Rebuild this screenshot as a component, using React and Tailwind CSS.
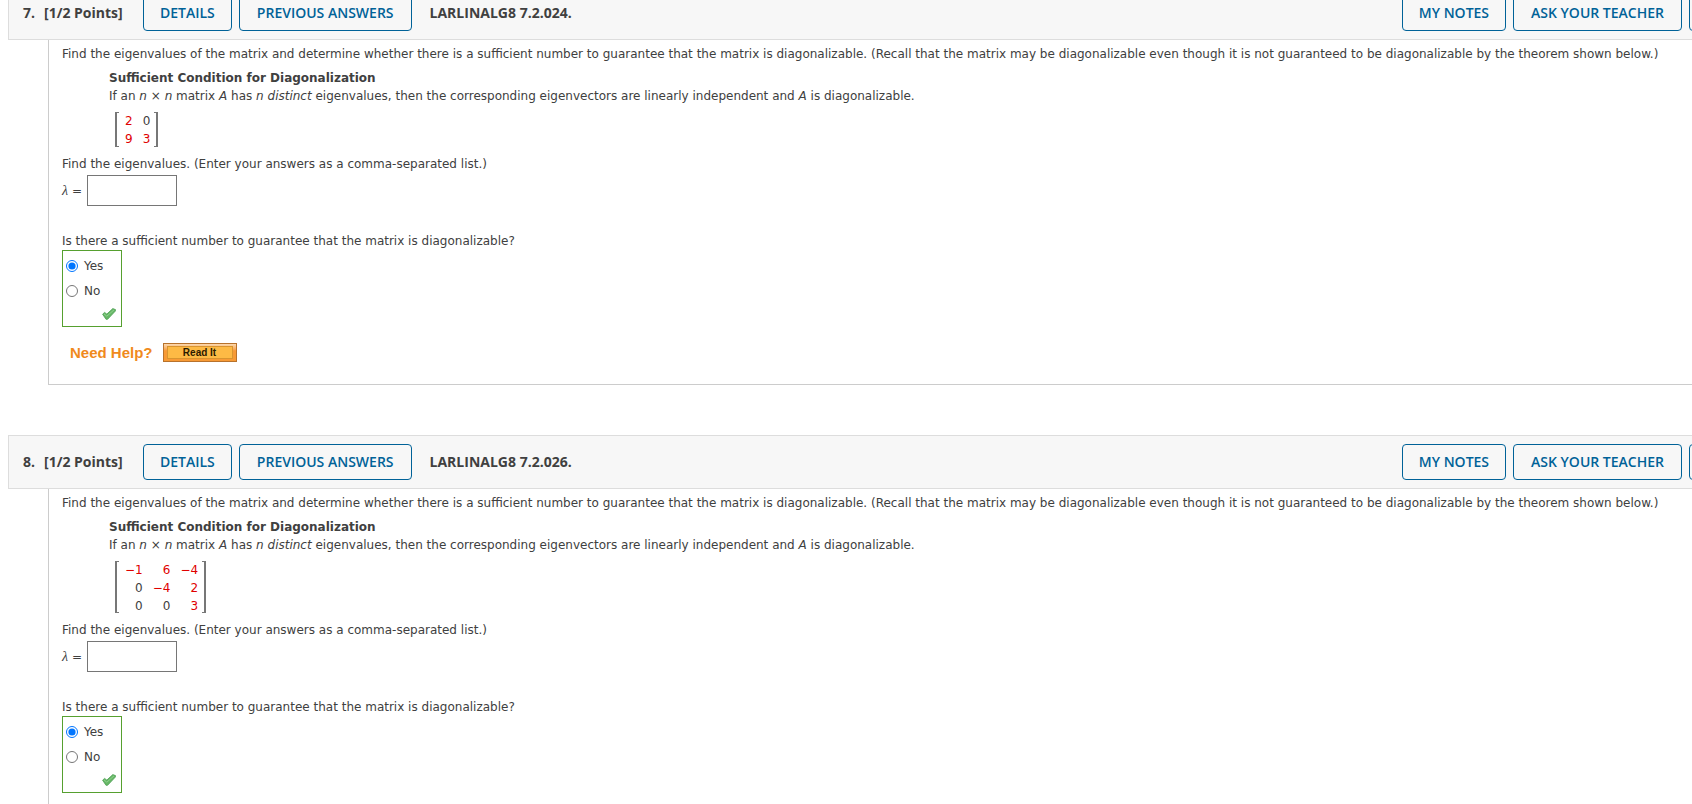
import React from "react";

const questions = [
  {
    number: 7,
    code: "LARLINALG8 7.2.024.",
    matrix: [
      [{ v: "2", red: true }, { v: "0" }],
      [{ v: "9", red: true }, { v: "3", red: true }],
    ],
    help: true,
  },
  {
    number: 8,
    code: "LARLINALG8 7.2.026.",
    matrix: [
      [{ v: "−1", red: true }, { v: "6", red: true }, { v: "−4", red: true }],
      [{ v: "0" }, { v: "−4", red: true }, { v: "2", red: true }],
      [{ v: "0" }, { v: "0" }, { v: "3", red: true }],
    ],
    help: false,
  },
];

function HeaderButton({ children, className = "px-4", ...rest }) {
  return (
    <button
      type="button"
      className={`h-9 shrink-0 rounded border border-[#006298] text-sm font-semibold whitespace-nowrap text-[#006298] ${className}`}
      {...rest}
    >
      {children}
    </button>
  );
}

function Matrix({ rows }) {
  return (
    <div className="flex w-fit">
      <span className="w-1 border-y border-l-2 border-[#777]" />
      <table className={rows.length > 2 ? "-mb-[2px]" : "-mb-px"}>
        <tbody>
          {rows.map((row, i) => (
            <tr key={i}>
              {row.map((cell, j) => (
                <td
                  key={j}
                  className={`p-0 pr-1 pl-[6px] text-right leading-[18px] ${cell.red ? "text-[#e00000]" : ""}`}
                >
                  {cell.v}
                </td>
              ))}
            </tr>
          ))}
        </tbody>
      </table>
      <span className="w-1 border-y border-r-2 border-[#777]" />
    </div>
  );
}

function CheckMark() {
  return (
    <svg width="14" height="12" viewBox="0 0 14 12" role="img" aria-label="Correct">
      <path
        d="M0.6 6.2 L2.6 4.4 L4.8 6.1 L10.8 0.6 L13.5 1.6 L13.4 3 L5.6 11.3 L4 11.3 Z"
        fill="#66b766"
        stroke="#4f9f55"
        strokeWidth="0.8"
        strokeLinejoin="round"
      />
      <path d="M2 6 L4.8 8.2 L12 1.9" fill="none" stroke="#8fd08c" strokeWidth="1" />
    </svg>
  );
}

function Choice({ name, label, checked }) {
  return (
    <label className="flex h-[25px] items-center gap-[6px]">
      <input type="radio" name={name} defaultChecked={checked} className="m-0 size-3 accent-[#0075ff]" />
      {label}
    </label>
  );
}

function Question({ q }) {
  const inputId = `eigenvalues-${q.number}`;
  return (
    <section className="mb-[50px] ml-2">
      <header className="-mr-9 flex h-[54px] items-center justify-between border border-[#ddd] bg-[#f7f7f7] px-[14px] font-['Open_Sans',sans-serif] text-sm font-bold">
        <div className="flex items-center">
          <span className="w-[21px]">{q.number}.</span>
          <span className="w-[99px]">[1/2 Points]</span>
          <div className="flex gap-[7px]">
            <HeaderButton>DETAILS</HeaderButton>
            <HeaderButton className="px-[17px]">PREVIOUS ANSWERS</HeaderButton>
          </div>
          <h2 className="ml-[18px]">{q.code}</h2>
        </div>
        <div className="flex gap-[7px]">
          <HeaderButton>MY NOTES</HeaderButton>
          <HeaderButton className="px-[17px]">ASK YOUR TEACHER</HeaderButton>
          <HeaderButton className="w-6" aria-label="More" />
        </div>
      </header>

      <div className={`ml-10 border-l border-[#ccc] pt-[5px] pl-[13px] ${q.help ? "border-b pb-[22px]" : "pb-16"}`}>
        <p className="whitespace-nowrap">
          Find the eigenvalues of the matrix and determine whether there is a sufficient number to guarantee that the
          matrix is diagonalizable. (Recall that the matrix may be diagonalizable even though it is not guaranteed to be
          diagonalizable by the theorem shown below.)
        </p>
        <div className="mt-[6px] ml-[47px]">
          <h3 className="font-bold">Sufficient Condition for Diagonalization</h3>
          <p>
            If an <i>n</i> × <i>n</i> matrix <i>A</i> has <i>n</i> <i>distinct</i> eigenvalues, then the corresponding
            eigenvectors are linearly independent and <i>A</i> is diagonalizable.
          </p>
          <div className="mt-[7px] ml-[6px]">
            <Matrix rows={q.matrix} />
          </div>
        </div>
        <p className="mt-2">Find the eigenvalues. (Enter your answers as a comma-separated list.)</p>
        <div className="mt-[2px] flex items-center">
          <label htmlFor={inputId} className="flex w-[25px] items-baseline gap-1">
            <i className="font-['Liberation_Serif',serif] text-sm leading-none">λ</i> =
          </label>
          <input id={inputId} type="text" className="h-[31px] w-[90px] border border-[#767676] bg-white px-1" />
        </div>
        <p className="mt-[26px]">Is there a sufficient number to guarantee that the matrix is diagonalizable?</p>
        <fieldset className="w-[60px] border border-[#56a02f] pt-[2px] pb-[6px] pl-[3px]">
          <Choice name={`sufficient-${q.number}`} label="Yes" checked />
          <Choice name={`sufficient-${q.number}`} label="No" />
          <div className="mt-[5px] flex justify-end pr-[5px]">
            <CheckMark />
          </div>
        </fieldset>
        {q.help && (
          <div className="mt-4 ml-2 flex items-center gap-[10px] font-['Liberation_Sans',Arial,sans-serif] font-bold">
            <span className="text-[15px] leading-[19px] text-[#f08a1c]">Need Help?</span>
            <button
              type="button"
              className="h-[19px] w-[74px] border border-[#b8722c] bg-linear-to-b from-[#fbd9ae] to-[#f79a35] to-40% px-[3px] py-[2px] text-[10px] text-[#2b1a00]"
            >
              <span className="block border border-[#d9952f] bg-[#fdba45] leading-[11px]">Read It</span>
            </button>
          </div>
        )}
      </div>
    </section>
  );
}

export default function App() {
  return (
    <main className="h-screen overflow-hidden bg-white font-['DejaVu_Sans',Verdana,sans-serif] text-xs leading-[18px] text-[#404040]">
      <div className="-mt-[14px]">
        {questions.map((q) => (
          <Question key={q.number} q={q} />
        ))}
      </div>
    </main>
  );
}
